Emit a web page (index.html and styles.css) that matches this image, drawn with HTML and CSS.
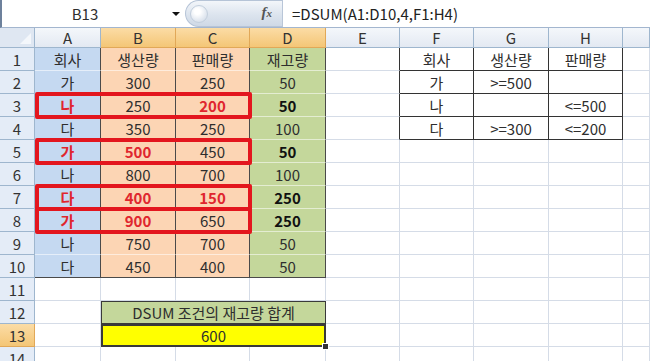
FILE: index.html
```html
<!DOCTYPE HTML>
<html>
<head>
<meta http-equiv="Content-Type" content="text/html; charset=utf-8">
<title>DSUM</title>
<link rel="stylesheet" href="styles.css">
</head>

<body>
<!-- 이름 상자 + 수식 입력줄 -->
<div class="fbar">
	<div class="namebox">B13</div>
	<div class="drop"></div>
	<div class="fxbox"><span class="knob"></span><i class="fx">f<small>x</small></i></div>
	<div class="formula">=DSUM(A1:D10,4,F1:H4)</div>
</div>

<div class="sheet">
	<!-- 열 머리글 -->
	<div class="c corner"><span></span></div>
	<div class="c ch">A</div>
	<div class="c ch on">B</div>
	<div class="c ch on">C</div>
	<div class="c ch on">D</div>
	<div class="c ch">E</div>
	<div class="c ch">F</div>
	<div class="c ch">G</div>
	<div class="c ch">H</div>
	<div class="c ch"></div>

	<!-- 1 -->
	<div class="c rh">1</div>
	<div class="c d co">회사</div>
	<div class="c d pr">생산량</div>
	<div class="c d pr">판매량</div>
	<div class="c d st">재고량</div>
	<div class="c lb"></div>
	<div class="c k">회사</div>
	<div class="c k">생산량</div>
	<div class="c k">판매량</div>
	<div class="c"></div>

	<!-- 2 -->
	<div class="c rh">2</div>
	<div class="c d co">가</div>
	<div class="c d pr">300</div>
	<div class="c d pr">250</div>
	<div class="c d st">50</div>
	<div class="c lb"></div>
	<div class="c k">가</div>
	<div class="c k">&gt;=500</div>
	<div class="c k"></div>
	<div class="c"></div>

	<!-- 3 -->
	<div class="c rh">3</div>
	<div class="c d co hot pin">나<span class="mark"></span></div>
	<div class="c d pr">250</div>
	<div class="c d pr hot">200</div>
	<div class="c d st b">50</div>
	<div class="c lb"></div>
	<div class="c k">나</div>
	<div class="c k"></div>
	<div class="c k">&lt;=500</div>
	<div class="c"></div>

	<!-- 4 -->
	<div class="c rh">4</div>
	<div class="c d co">다</div>
	<div class="c d pr">350</div>
	<div class="c d pr">250</div>
	<div class="c d st">100</div>
	<div class="c lb"></div>
	<div class="c k">다</div>
	<div class="c k">&gt;=300</div>
	<div class="c k">&lt;=200</div>
	<div class="c"></div>

	<!-- 5 -->
	<div class="c rh">5</div>
	<div class="c d co hot pin">가<span class="mark"></span></div>
	<div class="c d pr hot">500</div>
	<div class="c d pr">450</div>
	<div class="c d st b">50</div>
	<div class="c"></div>
	<div class="c"></div>
	<div class="c"></div>
	<div class="c"></div>
	<div class="c"></div>

	<!-- 6 -->
	<div class="c rh">6</div>
	<div class="c d co">나</div>
	<div class="c d pr">800</div>
	<div class="c d pr">700</div>
	<div class="c d st">100</div>
	<div class="c"></div>
	<div class="c"></div>
	<div class="c"></div>
	<div class="c"></div>
	<div class="c"></div>

	<!-- 7 -->
	<div class="c rh">7</div>
	<div class="c d co hot pin">다<span class="mark"></span></div>
	<div class="c d pr hot">400</div>
	<div class="c d pr hot">150</div>
	<div class="c d st b">250</div>
	<div class="c"></div>
	<div class="c"></div>
	<div class="c"></div>
	<div class="c"></div>
	<div class="c"></div>

	<!-- 8 -->
	<div class="c rh">8</div>
	<div class="c d co hot pin">가<span class="mark"></span></div>
	<div class="c d pr hot">900</div>
	<div class="c d pr">650</div>
	<div class="c d st b">250</div>
	<div class="c"></div>
	<div class="c"></div>
	<div class="c"></div>
	<div class="c"></div>
	<div class="c"></div>

	<!-- 9 -->
	<div class="c rh">9</div>
	<div class="c d co">나</div>
	<div class="c d pr">750</div>
	<div class="c d pr">700</div>
	<div class="c d st">50</div>
	<div class="c"></div>
	<div class="c"></div>
	<div class="c"></div>
	<div class="c"></div>
	<div class="c"></div>

	<!-- 10 -->
	<div class="c rh">10</div>
	<div class="c d co last">다</div>
	<div class="c d pr last">450</div>
	<div class="c d pr last">400</div>
	<div class="c d st last">50</div>
	<div class="c"></div>
	<div class="c"></div>
	<div class="c"></div>
	<div class="c"></div>
	<div class="c"></div>

	<!-- 11 -->
	<div class="c rh">11</div>
	<div class="c"></div>
	<div class="c"></div>
	<div class="c"></div>
	<div class="c"></div>
	<div class="c"></div>
	<div class="c"></div>
	<div class="c"></div>
	<div class="c"></div>
	<div class="c"></div>

	<!-- 12 : 제목 (B12:D12 병합) -->
	<div class="c rh">12</div>
	<div class="c"></div>
	<div class="c sum">DSUM 조건의 재고량 합계</div>
	<div class="c"></div>
	<div class="c"></div>
	<div class="c"></div>
	<div class="c"></div>
	<div class="c"></div>

	<!-- 13 : 결과 (B13:D13 병합, 선택됨) -->
	<div class="c rh on">13</div>
	<div class="c"></div>
	<div class="c total">600<span class="handle"></span></div>
	<div class="c"></div>
	<div class="c"></div>
	<div class="c"></div>
	<div class="c"></div>
	<div class="c"></div>

	<!-- 14 -->
	<div class="c rh">14</div>
	<div class="c"></div>
	<div class="c"></div>
	<div class="c"></div>
	<div class="c"></div>
	<div class="c"></div>
	<div class="c"></div>
	<div class="c"></div>
	<div class="c"></div>
	<div class="c"></div>
</div>
</body>
</html>
```

FILE: styles.css
```css
*{
	margin: 0;
	padding: 0;
	box-sizing: border-box;
}

body{
	width: 650px;
	height: 361px;
	overflow: hidden;
	background-color: #fff;
	color: #2e2e2e;
	font-family: "Noto Sans CJK KR", "Noto Sans", sans-serif;
}

/* 수식 입력줄 */
.fbar{
	display: flex;
	height: 28px;
	border-left: 2px solid #6d819c;
	border-bottom: 1px solid #a3b6cf;
}
.namebox{
	width: 166px;
	text-align: center;
	font-size: 15px;
	line-height: 27px;
}
.drop{
	width: 17px;
	position: relative;
}
.drop:after{
	content: '';
	position: absolute;
	left: 4px;
	top: 12px;
	border-left: 4px solid transparent;
	border-right: 4px solid transparent;
	border-top: 4px solid #111;
}
.fxbox{
	position: relative;
	width: 97px;
	height: 27px;
	border: 1px solid #b6c4d7;
	border-right: none;
	border-radius: 14px 0 0 14px;
	background: linear-gradient(#f3f6fa, #dce4ee 55%, #cfd9e6);
}
.knob{
	position: absolute;
	left: 4px;
	top: 4px;
	width: 18px;
	height: 18px;
	border-radius: 50%;
	border: 1px solid #c3cfdd;
	background: radial-gradient(circle at 40% 35%, #fff 20%, #e3e9f1 60%, #cbd5e2);
}
.fx{
	position: absolute;
	right: 10px;
	top: 3px;
	font-family: "Liberation Serif", serif;
	font-size: 15px;
	font-weight: bold;
	color: #555;
}
.fx small{
	font-size: 11px;
}
.formula{
	flex: 1;
	padding-left: 9px;
	border-left: 1px solid #b9c6d8;
	font-size: 15px;
	line-height: 27px;
	color: #222;
}

/* 시트 */
.sheet{
	display: grid;
	grid-template-columns: 35px 66px 75px 74px 76px 74px 74px 75px 74px 1fr;
	grid-template-rows: 20px repeat(14, 23px);
}
.c{
	border-right: 1px solid #d5dce7;
	border-bottom: 1px solid #d5dce7;
	text-align: center;
	font-size: 15px;
	line-height: 24px;
	white-space: nowrap;
}

/* 머리글 */
.corner{
	position: relative;
	background-color: #dfe7f2;
	border-color: #9eb6ce;
}
.corner span{
	position: absolute;
	right: 3px;
	bottom: 3px;
	border-left: 11px solid transparent;
	border-bottom: 11px solid #f4f7fb;
}
.ch{
	background: linear-gradient(#f4f7fb, #e3e9f2);
	border-color: #9eb6ce;
	line-height: 20px;
	color: #333;
}
.ch.on{
	background: linear-gradient(#fbdca6, #f4c676);
	border-color: #e1a858;
}
.rh{
	background-color: #e4ecf7;
	border-color: #9eb6ce;
	color: #333;
}
.rh.on{
	background: linear-gradient(#fbdca6, #f4c676);
	border-color: #e1a858;
}

/* 원본 데이터 표 */
.d{
	border-right-color: #4a4a4a;
	border-bottom-color: rgba(255,255,255,0.55);
}
.d.last{
	border-bottom-color: #4a4a4a;
}
.co{
	background-color: #c5d9f1;
}
.pr{
	background-color: #fcd5b4;
}
.st{
	background-color: #c4d79b;
}
.b{
	font-weight: bold;
	color: #111;
}
.hot{
	font-weight: bold;
	color: #e0262e;
}
.pin{
	position: relative;
}
.mark{
	position: absolute;
	left: 0;
	top: -2px;
	width: 217px;
	height: 27px;
	border: 4px solid #e3161e;
	border-radius: 2px;
}

/* 조건 표 */
.lb{
	border-right-color: #333;
}
.k{
	border-right-color: #333;
	border-bottom-color: #333;
}

/* 합계 */
.sum{
	grid-column: span 3;
	background-color: #c4d79b;
	border: 1px solid #3a3a3a;
	line-height: 22px;
}
.total{
	grid-column: span 3;
	position: relative;
	background-color: #ffff00;
	border: 2px solid #3a3a3a;
	line-height: 20px;
}
.handle{
	position: absolute;
	right: -5px;
	bottom: -5px;
	width: 7px;
	height: 7px;
	background-color: #333;
	border: 1px solid #fff;
}
```
